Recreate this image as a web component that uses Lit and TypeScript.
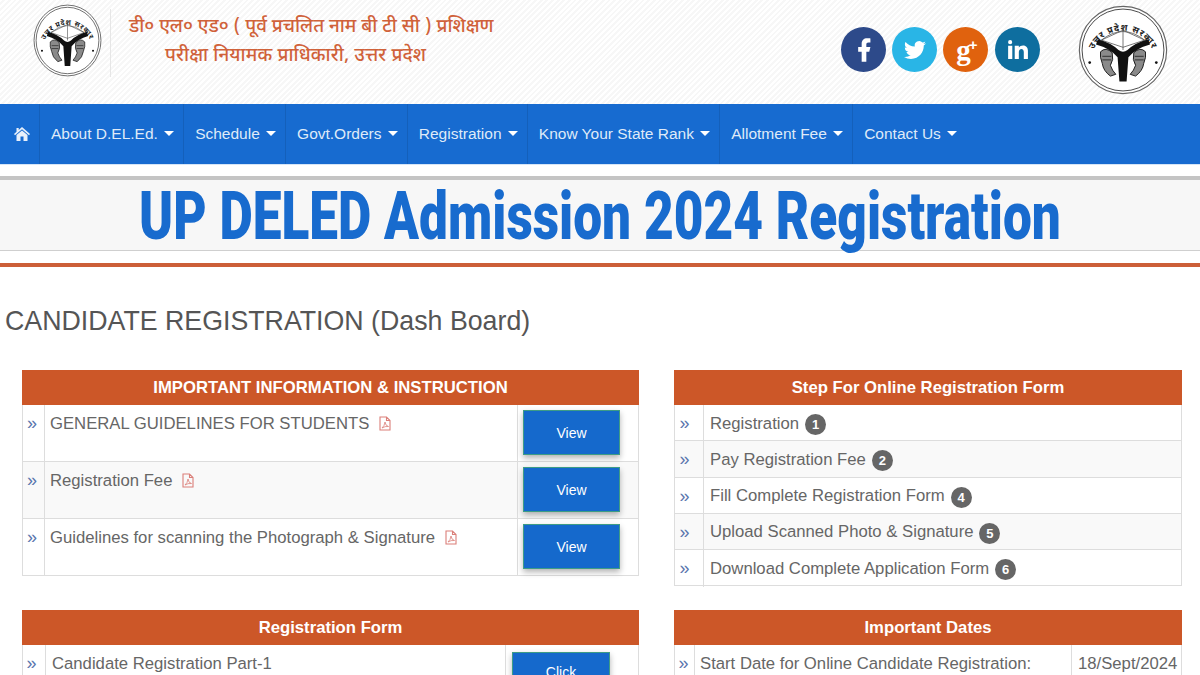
import { LitElement, html, css, svg } from 'lit';
import { customElement, property } from 'lit/decorators.js';

const NAV = ['About D.EL.Ed.', 'Schedule', 'Govt.Orders', 'Registration', 'Know Your State Rank', 'Allotment Fee', 'Contact Us'];
const INFO = ['GENERAL GUIDELINES FOR STUDENTS', 'Registration Fee', 'Guidelines for scanning the Photograph & Signature'];
const STEPS: [string, number][] = [
  ['Registration', 1],
  ['Pay Registration Fee', 2],
  ['Fill Complete Registration Form', 4],
  ['Upload Scanned Photo & Signature', 5],
  ['Download Complete Application Form', 6],
];

/** UP government seal, drawn at any size. */
@customElement('up-emblem')
export class UpEmblem extends LitElement {
  @property() uid = 'arc';

  static styles = css`
    :host { display: block; }
    svg { display: block; width: 100%; height: 100%; }
    text { font: 700 10px "Noto Sans Devanagari", "Noto Sans", sans-serif; fill: #222; text-anchor: middle; letter-spacing: 1px; }
  `;

  render() {
    return html`<svg viewBox="0 0 100 100" preserveAspectRatio="none">
      ${svg`
      <circle cx="50" cy="50" r="48.5" fill="#fff" stroke="#666" stroke-width="1.3"/>
      <circle cx="50" cy="50" r="45.5" fill="none" stroke="#222" stroke-width=".9"/>
      <path id=${this.uid} d="M14.6 58A36 36 0 0 1 85.4 58" fill="none"/>
      <text><textPath href="#${this.uid}" startOffset="50%">उत्तर प्रदेश सरकार</textPath></text>
      <path d="M26 39Q50 20 74 39M26 39L50 28L74 39M50 25V50M26 39L50 47L74 39" fill="none" stroke="#444" stroke-width=".8"/>
      <path d="M22 38Q37 42 45 50Q50 54 55 50Q63 42 78 38L80 44Q65 48 56 58L54 85H46L44 58Q35 48 20 44Z" fill="#111"/>
      <g fill="#8a8a8a" stroke="#111" stroke-width="1">
        <path d="M25 52Q31 46 38 53Q40 61 36 67Q38 73 42 77L36 79Q28 73 27 65Q24 58 25 52Z"/>
        <path d="M75 52Q69 46 62 53Q60 61 64 67Q62 73 58 77L64 79Q72 73 73 65Q76 58 75 52Z"/>
      </g>
      <path d="M27 57H37M27 61H37M63 57H73M63 61H73" stroke="#111" stroke-width=".8"/>
      <circle cx="13" cy="64" r="1.5" fill="#111"/>
      <circle cx="87" cy="64" r="1.5" fill="#111"/>
      `}
    </svg>`;
  }
}

@customElement('app-root')
export class AppRoot extends LitElement {
  static styles = css`
    :host {
      display: block;
      width: 1200px;
      height: 675px;
      overflow: hidden;
      background: #fff;
      font-family: "Liberation Sans", Arial, sans-serif;
      color: #666;
    }

    /* top strip */
    .top {
      height: 104px;
      box-sizing: border-box;
      display: flex;
      align-items: flex-start;
      padding-left: 33px;
      background: repeating-linear-gradient(135deg, #fff 0 2px, #f7f7f7 2px 4px);
    }
    .seal-left { width: 69px; height: 73px; margin-top: 4px; }
    .rule { width: 1px; height: 68px; margin: 9px 0 0 8px; background: #e6e6e6; }
    .hindi {
      width: 364px;
      margin: 13px 0 0 18px;
      white-space: nowrap;
      font: 500 18.8px/29px "Noto Sans Devanagari", "Noto Sans", sans-serif;
      color: #d0623a;
    }
    .hindi .second { padding-left: 36px; letter-spacing: 0.17px; }
    .socials { display: flex; gap: 6.2px; margin: 27px 0 0 348px; }
    .soc {
      width: 45px;
      height: 45px;
      border-radius: 50%;
      display: flex;
      align-items: center;
      justify-content: center;
      color: #fff;
    }
    .soc svg { fill: currentColor; }
    .fb { background: #2d4a8a; }
    .tw { background: #29b5e6; }
    .gp { background: #e0620e; font: 700 29px/40px "Liberation Serif", serif; letter-spacing: -2px; }
    .gp sup { font: 700 15px "Liberation Sans", sans-serif; margin-top: -10px; }
    .li { background: #0e6e9f; }
    .seal-right { width: 90px; height: 90px; margin: 5px 0 0 38px; }

    /* nav */
    nav {
      height: 61px;
      box-sizing: border-box;
      display: flex;
      background: #176bd0;
      color: #dfeaf8;
      font-size: 15.5px;
      border-bottom: 1px solid #d5e5f7;
    }
    .nav-item {
      display: flex;
      align-items: center;
      gap: 6px;
      padding: 0 9.3px 1px 11px;
      border-right: 1px solid #1460bb;
    }
    .nav-item:last-child { border-right: 0; }
    .nav-item.home { padding: 0 9px 0 14px; }
    .caret {
      width: 0;
      height: 0;
      border-left: 5px solid transparent;
      border-right: 5px solid transparent;
      border-top: 5px solid #fff;
    }

    /* banner */
    .banner {
      margin-top: 11px;
      height: 75px;
      box-sizing: border-box;
      border-top: 4px solid #c4c4c4;
      border-bottom: 1px solid #cfcfcf;
      background: #f7f7f7;
      display: flex;
      justify-content: center;
    }
    .banner h1 {
      flex: none;
      margin: 0;
      font: 900 67px/72px Roboto, "Liberation Sans", sans-serif;
      color: #186bce;
      white-space: nowrap;
      transform: scaleX(0.767);
    }
    .accent { height: 4px; margin-top: 12px; background: #cc5f38; }

    h2 {
      margin: 39px 0 0 5px;
      font: 400 26.75px/30px "Liberation Sans", sans-serif;
      color: #555;
    }

    /* panels */
    .panels {
      display: grid;
      grid-template-columns: 617px 508px;
      column-gap: 35px;
      row-gap: 23.5px;
      padding-left: 22px;
      margin-top: 34px;
    }
    .head {
      height: 35px;
      background: #cc5728;
      color: #fff;
      font-weight: 700;
      font-size: 16.7px;
      line-height: 35px;
      text-align: center;
    }
    .row {
      display: grid;
      box-sizing: border-box;
      border: 1px solid #ddd;
      border-top: 0;
      font-size: 16.7px;
    }
    .row.alt { background: #f9f9f9; }
    .row > div { border-left: 1px solid #ddd; box-sizing: border-box; }
    .row > div:first-child { border-left: 0; }
    .mark { color: #5a76ad; font-size: 18px; text-align: center; }

    .info .row { grid-template-columns: 21px 473px 1fr; height: 57px; }
    .info .mark { padding: 8px 3px 0 0; }
    .info .txt { padding: 9px 6px 0 5px; }
    .info .act { padding: 5px 0 0 5px; }

    .steps .row { grid-template-columns: 28px 1fr; height: 36.3px; align-items: stretch; }
    .steps .mark { line-height: 37px; padding-right: 9px; }
    .steps .txt { padding-left: 6px; display: flex; align-items: center; gap: 6px; }

    .form .row { grid-template-columns: 22px 460px 1fr; height: 57px; }
    .form .mark { padding: 8px 5px 0 0; }
    .form .txt { padding: 9px 0 0 6px; }
    .form .act { padding: 7px 0 0 6px; }

    .dates .row { grid-template-columns: 19px 377px 1fr; height: 57px; }
    .dates .mark { padding: 8px 2px 0 0; }
    .dates .txt { padding: 9px 0 0 5px; }
    .dates .val { padding: 9px 0 0 6px; white-space: nowrap; }

    .btn {
      width: 97px;
      height: 45px;
      box-sizing: border-box;
      background: #1569cc;
      border: 1px solid #3d9c86;
      box-shadow: 0 3px 6px rgba(0, 0, 0, 0.3);
      color: #fff;
      font-size: 14px;
      display: flex;
      align-items: center;
      justify-content: center;
    }
    .form .btn { height: 41px; width: 98px; }
    .pdf { display: inline-block; vertical-align: -2px; margin-left: 10px; }
    .badge {
      width: 21px;
      height: 21px;
      margin-top: 2px;
      border-radius: 50%;
      background: #666;
      color: #fff;
      font-size: 13px;
      font-weight: 700;
      line-height: 21px;
      text-align: center;
    }
  `;

  private pdf() {
    return html`<svg class="pdf" width="12" height="15" viewBox="0 0 12 15" fill="none" stroke="#db7f79" stroke-width="1.1">
      <path d="M1 1H7.5L11 4.5V14H1ZM7.5 1V4.5H11"/>
      <path d="M3 12Q5.5 10 6 6Q6.5 10 9.5 10.5Q6 10 3 12Z" stroke-width=".8"/>
    </svg>`;
  }

  render() {
    return html`
      <div class="top">
        <up-emblem class="seal-left" uid="arc-l"></up-emblem>
        <div class="rule"></div>
        <div class="hindi">
          <div>डी० एल० एड० ( पूर्व प्रचलित नाम बी टी सी ) प्रशिक्षण</div>
          <div class="second">परीक्षा नियामक प्राधिकारी, उत्तर प्रदेश</div>
        </div>
        <div class="socials">
          <div class="soc fb"><svg width="28" height="28" viewBox="0 0 24 24"><path d="M14 13.5h2.5l1-4H14v-2c0-1.03 0-2 2-2h1.5V2.14c-.326-.043-1.557-.14-2.857-.14C11.928 2 10 3.657 10 6.7v2.8H7v4h3V22h4v-8.5z"/></svg></div>
          <div class="soc tw"><svg width="22" height="22" viewBox="0 0 24 24"><path d="M23.953 4.57a10 10 0 01-2.825.775 4.958 4.958 0 002.163-2.723c-.951.555-2.005.959-3.127 1.184a4.92 4.92 0 00-8.384 4.482C7.69 8.095 4.067 6.13 1.64 3.162a4.822 4.822 0 00-.666 2.475c0 1.71.87 3.213 2.188 4.096a4.904 4.904 0 01-2.228-.616v.06a4.923 4.923 0 003.946 4.827 4.996 4.996 0 01-2.212.085 4.936 4.936 0 004.604 3.417 9.867 9.867 0 01-6.102 2.105c-.39 0-.779-.023-1.17-.067a13.995 13.995 0 007.557 2.209c9.053 0 13.998-7.496 13.998-13.985 0-.21 0-.42-.015-.63A9.935 9.935 0 0024 4.59z"/></svg></div>
          <div class="soc gp">g<sup>+</sup></div>
          <div class="soc li"><svg width="25" height="25" viewBox="0 0 24 24"><path d="M6.94 5a2 2 0 1 1-4-.002 2 2 0 0 1 4 .002zM7 8.48H3V21h4V8.48zm6.32 0H9.34V21h3.94v-6.57c0-3.66 4.77-4 4.77 0V21H22v-7.93c0-6.17-7.06-5.94-8.72-2.91l.04-1.68z"/></svg></div>
        </div>
        <up-emblem class="seal-right" uid="arc-r"></up-emblem>
      </div>

      <nav>
        <div class="nav-item home">
          <svg width="16" height="14" viewBox="0 0 16 14" fill="#e8f0fb"><path d="M8 0L16 7l-1 1.2L8 2.2 1 8.2 0 7l2.5-2.2V1h2.2v1.9zM8 3.4l5.5 4.7V14H9.5V9.5h-3V14H2.5V8.1z"/></svg>
        </div>
        ${NAV.map(n => html`<div class="nav-item">${n}<span class="caret"></span></div>`)}
      </nav>

      <div class="banner"><h1>UP DELED Admission 2024 Registration</h1></div>
      <div class="accent"></div>

      <h2>CANDIDATE REGISTRATION (Dash Board)</h2>

      <div class="panels">
        <section class="info">
          <div class="head">IMPORTANT INFORMATION &amp; INSTRUCTION</div>
          ${INFO.map((t, i) => html`
            <div class="row ${i % 2 ? 'alt' : ''}">
              <div class="mark">»</div>
              <div class="txt">${t}${this.pdf()}</div>
              <div class="act"><div class="btn">View</div></div>
            </div>`)}
        </section>

        <section class="steps">
          <div class="head">Step For Online Registration Form</div>
          ${STEPS.map(([t, n], i) => html`
            <div class="row ${i % 2 ? 'alt' : ''}">
              <div class="mark">»</div>
              <div class="txt">${t}<span class="badge">${n}</span></div>
            </div>`)}
        </section>

        <section class="form">
          <div class="head">Registration Form</div>
          <div class="row">
            <div class="mark">»</div>
            <div class="txt">Candidate Registration Part-1</div>
            <div class="act"><div class="btn">Click</div></div>
          </div>
        </section>

        <section class="dates">
          <div class="head">Important Dates</div>
          <div class="row">
            <div class="mark">»</div>
            <div class="txt">Start Date for Online Candidate Registration:</div>
            <div class="val">18/Sept/2024</div>
          </div>
        </section>
      </div>
    `;
  }
}
